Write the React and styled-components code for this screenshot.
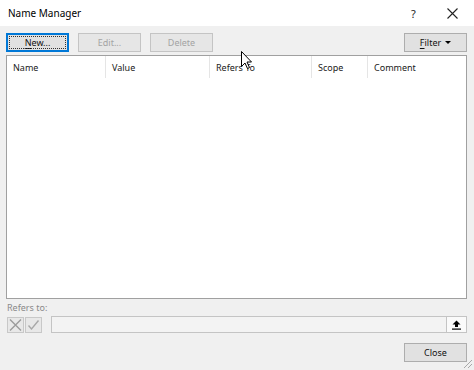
import React from 'react'
import styled, { createGlobalStyle, css } from 'styled-components'

const GlobalStyle = createGlobalStyle`
  html, body {
    margin: 0;
    padding: 0;
    overflow: hidden;
  }
  body {
    font-family: "Noto Sans", "Open Sans", sans-serif;
    font-size: 9px;
    color: #000;
  }
`

const Dialog = styled.div`
  position: relative;
  width: 474px;
  height: 370px;
  display: flex;
  flex-direction: column;
  background: #f0f0f0;
`

const TitleBar = styled.div`
  height: 26px;
  display: flex;
  align-items: center;
  background: #fff;
  padding-left: 8px;
  padding-right: 2px;
`

const Title = styled.div`
  flex: 1;
  font-size: 10px;
  color: #000;
  padding-bottom: 1px;
`

const TitleIcon = styled.div`
  width: 39px;
  height: 26px;
  display: flex;
  align-items: center;
  justify-content: center;
  font-size: 11px;
  color: #222;
`

const Body = styled.div`
  flex: 1;
  display: flex;
  flex-direction: column;
  padding: 7px 7px 0 6px;
`

const Toolbar = styled.div`
  display: flex;
  gap: 9px;
  height: 19px;
`

const Button = styled.button`
  box-sizing: border-box;
  width: 63px;
  height: 19px;
  padding: 0;
  margin: 0;
  font-family: inherit;
  font-size: 9px;
  line-height: 12px;
  background: #e1e1e1;
  border: 1px solid #adadad;
  color: #111;
  display: flex;
  align-items: center;
  justify-content: center;
  ${({ $focused }) => $focused && css`
    border-color: #0078d7;
    box-shadow: inset 0 0 0 1px #0078d7;
    outline: 1px dotted #333;
    outline-offset: -4px;
  `}
  ${({ disabled }) => disabled && css`
    background: #e6e6e6;
    border-color: #c4c4c4;
    color: #a3a3a3;
  `}
  ${({ $right }) => $right && css`
    margin-left: auto;
  `}
`

const Key = styled.span`
  text-decoration: underline;
  text-underline-offset: 2px;
`

const Caret = styled.span`
  margin-left: 4px;
  width: 0;
  height: 0;
  border-left: 3px solid transparent;
  border-right: 3px solid transparent;
  border-top: 3px solid #000;
`

const List = styled.div`
  box-sizing: border-box;
  margin-top: 3px;
  height: 244px;
  background: #fff;
  border: 1px solid #a0a0a0;
`

const HeaderRow = styled.div`
  display: flex;
  height: 22px;
`

const HeaderCell = styled.div`
  box-sizing: border-box;
  width: ${({ $w }) => $w}px;
  flex: ${({ $grow }) => ($grow ? 1 : 'none')};
  padding-left: 6px;
  display: flex;
  align-items: center;
  color: #1a1a1a;
  border-right: ${({ $grow }) => ($grow ? 'none' : '1px solid #e5e5e5')};
`

const Label = styled.div`
  margin-top: 2px;
  height: 13px;
  padding-left: 1px;
  line-height: 13px;
  color: #8a8a8a;
`

const RefRow = styled.div`
  display: flex;
  align-items: center;
  height: 17px;
  margin-top: 2px;
  padding-left: 1px;
`

const IconBtn = styled.div`
  box-sizing: border-box;
  width: 17px;
  height: 16px;
  margin-right: 1px;
  border: 1px solid #c8c8c8;
  background: #e8e8e8;
  display: flex;
  align-items: center;
  justify-content: center;
`

const RefInput = styled.div`
  box-sizing: border-box;
  flex: 1;
  height: 17px;
  margin-left: 8px;
  border: 1px solid #c4c4c4;
  background: #f3f3f3;
`

const CollapseBtn = styled.div`
  box-sizing: border-box;
  width: 20px;
  height: 17px;
  border: 1px solid #c4c4c4;
  border-left: none;
  background: #fafafa;
  display: flex;
  align-items: center;
  justify-content: center;
`

const Footer = styled.div`
  display: flex;
  justify-content: flex-end;
  margin-top: 10px;
`

const Grip = styled.svg`
  position: absolute;
  right: 1px;
  bottom: 1px;
`

const Cursor = styled.svg`
  position: absolute;
  left: 241px;
  top: 51px;
`

const columns = [
  { name: 'Name', w: 99 },
  { name: 'Value', w: 104 },
  { name: 'Refers To', w: 102 },
  { name: 'Scope', w: 56 },
  { name: 'Comment', grow: true },
]

export default function App() {
  return (
    <Dialog>
      <GlobalStyle />
      <TitleBar>
        <Title>Name Manager</Title>
        <TitleIcon>?</TitleIcon>
        <TitleIcon>
          <svg width="11" height="11" viewBox="0 0 11 11">
            <path d="M0.5 0.5 L10.5 10.5 M10.5 0.5 L0.5 10.5" stroke="#222" strokeWidth="1.1" />
          </svg>
        </TitleIcon>
      </TitleBar>
      <Body>
        <Toolbar>
          <Button $focused><Key>N</Key>ew...</Button>
          <Button disabled>Edit...</Button>
          <Button disabled>Delete</Button>
          <Button $right><Key>F</Key>ilter<Caret /></Button>
        </Toolbar>
        <List>
          <HeaderRow>
            {columns.map(c => (
              <HeaderCell key={c.name} $w={c.w} $grow={c.grow}>{c.name}</HeaderCell>
            ))}
          </HeaderRow>
        </List>
        <Label>Refers to:</Label>
        <RefRow>
          <IconBtn>
            <svg width="13" height="12" viewBox="0 0 13 12">
              <path d="M1 0.5 L12 11.5 M12 0.5 L1 11.5" stroke="#9a9a9a" strokeWidth="1.4" />
            </svg>
          </IconBtn>
          <IconBtn>
            <svg width="13" height="12" viewBox="0 0 13 12">
              <path d="M1.5 6.5 L4.5 10 L11.5 1.5" stroke="#a8a8a8" strokeWidth="1.4" fill="none" />
            </svg>
          </IconBtn>
          <RefInput />
          <CollapseBtn>
            <svg width="9" height="10" viewBox="0 0 9 10">
              <path d="M4.5 0.5 L8.5 4.5 L6 4.5 L6 7 L3 7 L3 4.5 L0.5 4.5 Z" fill="#000" />
              <rect x="0" y="8.5" width="9" height="1.2" fill="#000" />
            </svg>
          </CollapseBtn>
        </RefRow>
        <Footer>
          <Button>Close</Button>
        </Footer>
      </Body>
      <Grip width="12" height="12" viewBox="0 0 12 12">
        <path d="M11 3 L3 11 M11 7 L7 11" stroke="#a8a8a8" strokeWidth="1" />
      </Grip>
      <Cursor width="12" height="19" viewBox="0 0 12 19">
        <path d="M0.5 0.5 L0.5 15.5 L4 12 L6.5 17.5 L8.5 16.5 L6 11 L10.5 11 Z" fill="#fff" stroke="#000" strokeWidth="1" />
      </Cursor>
    </Dialog>
  )
}
